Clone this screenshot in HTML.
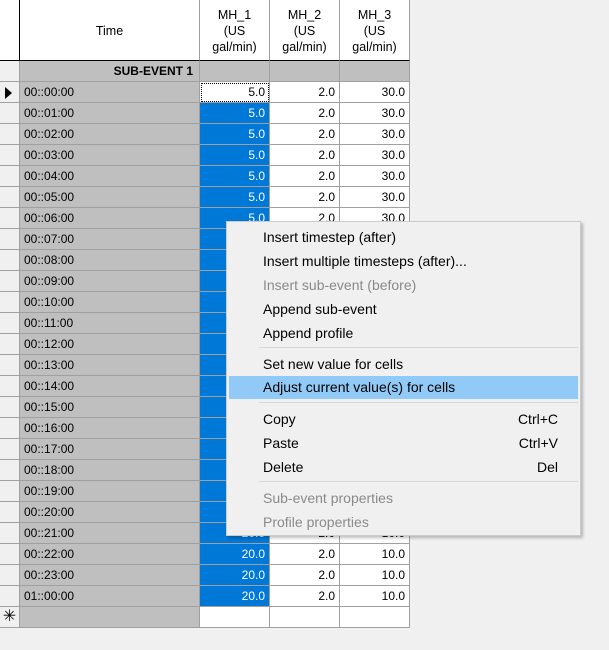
<!DOCTYPE html><html><head><style>
body{margin:0;width:609px;height:650px;background:#f0f0f0;font-family:"Liberation Sans",sans-serif;position:relative;overflow:hidden}
.r{position:absolute;left:0;height:21px;display:flex;font-size:12px}
.r div{box-sizing:border-box;height:21px;border-right:1px solid #a0a0a0;border-bottom:1px solid #a0a0a0;line-height:21px;white-space:nowrap}
.h{width:20px;background:#f0f0f0;border-right:1px solid #a0a0a0!important}
.t{width:180px;background:#bfbfbf;padding-left:4px;color:#000}
.c{width:70px;background:#fff;text-align:right;padding-right:4px}
.s{background:#0078d7;color:#fff}
.hd{position:absolute;top:0;height:61px;box-sizing:border-box;border-right:1px solid #a0a0a0;border-bottom:1px solid #000;background:#fff;font-size:12.5px;text-align:center;display:flex;align-items:center;justify-content:center;line-height:16px;padding-top:1px}
.m{position:absolute;left:226px;top:221px;width:355px;height:315px;box-sizing:border-box;background:#f0f0f0;border:1px solid #cccccc;box-shadow:2px 2px 3px rgba(0,0,0,.25);font-size:14px}
.i{position:absolute;left:36px;height:24px;line-height:22px;color:#000}
.d{color:#8a8a8a}
.k{position:absolute;right:22px}
.sep{position:absolute;left:32px;right:2px;height:1px;background:#d7d7d7}
</style></head><body>
<div class="hd" style="left:0;width:20px;border-right:1px solid #000;background:#fff"></div>
<div class="hd" style="left:20px;width:180px">Time</div>
<div class="hd" style="left:200px;width:70px">MH_1<br>(US<br>gal/min)</div>
<div class="hd" style="left:270px;width:70px">MH_2<br>(US<br>gal/min)</div>
<div class="hd" style="left:340px;width:70px">MH_3<br>(US<br>gal/min)</div>
<div class="r" style="top:61px"><div class="h"></div><div class="t" style="text-align:right;font-weight:bold;padding-right:6px">SUB-EVENT 1</div><div class="c" style="background:#bfbfbf"></div><div class="c" style="background:#bfbfbf"></div><div class="c" style="background:#bfbfbf"></div></div>
<div class="r" style="top:82px"><div class="h" style="position:relative"><span style="position:absolute;left:5px;top:5px;width:0;height:0;border-top:6px solid transparent;border-bottom:6px solid transparent;border-left:7px solid #000"></span></div><div class="t">00::00:00</div><div class="c" style="outline:1px dotted #000;outline-offset:-2px">5.0</div><div class="c">2.0</div><div class="c">30.0</div></div>
<div class="r" style="top:103px"><div class="h"></div><div class="t">00::01:00</div><div class="c s">5.0</div><div class="c">2.0</div><div class="c">30.0</div></div>
<div class="r" style="top:124px"><div class="h"></div><div class="t">00::02:00</div><div class="c s">5.0</div><div class="c">2.0</div><div class="c">30.0</div></div>
<div class="r" style="top:145px"><div class="h"></div><div class="t">00::03:00</div><div class="c s">5.0</div><div class="c">2.0</div><div class="c">30.0</div></div>
<div class="r" style="top:166px"><div class="h"></div><div class="t">00::04:00</div><div class="c s">5.0</div><div class="c">2.0</div><div class="c">30.0</div></div>
<div class="r" style="top:187px"><div class="h"></div><div class="t">00::05:00</div><div class="c s">5.0</div><div class="c">2.0</div><div class="c">30.0</div></div>
<div class="r" style="top:208px"><div class="h"></div><div class="t">00::06:00</div><div class="c s">5.0</div><div class="c">2.0</div><div class="c">30.0</div></div>
<div class="r" style="top:229px"><div class="h"></div><div class="t">00::07:00</div><div class="c s">5.0</div><div class="c">2.0</div><div class="c">30.0</div></div>
<div class="r" style="top:250px"><div class="h"></div><div class="t">00::08:00</div><div class="c s">5.0</div><div class="c">2.0</div><div class="c">30.0</div></div>
<div class="r" style="top:271px"><div class="h"></div><div class="t">00::09:00</div><div class="c s">5.0</div><div class="c">2.0</div><div class="c">30.0</div></div>
<div class="r" style="top:292px"><div class="h"></div><div class="t">00::10:00</div><div class="c s">5.0</div><div class="c">2.0</div><div class="c">30.0</div></div>
<div class="r" style="top:313px"><div class="h"></div><div class="t">00::11:00</div><div class="c s">5.0</div><div class="c">2.0</div><div class="c">30.0</div></div>
<div class="r" style="top:334px"><div class="h"></div><div class="t">00::12:00</div><div class="c s">5.0</div><div class="c">2.0</div><div class="c">30.0</div></div>
<div class="r" style="top:355px"><div class="h"></div><div class="t">00::13:00</div><div class="c s">5.0</div><div class="c">2.0</div><div class="c">30.0</div></div>
<div class="r" style="top:376px"><div class="h"></div><div class="t">00::14:00</div><div class="c s">5.0</div><div class="c">2.0</div><div class="c">30.0</div></div>
<div class="r" style="top:397px"><div class="h"></div><div class="t">00::15:00</div><div class="c s">20.0</div><div class="c">2.0</div><div class="c">10.0</div></div>
<div class="r" style="top:418px"><div class="h"></div><div class="t">00::16:00</div><div class="c s">20.0</div><div class="c">2.0</div><div class="c">10.0</div></div>
<div class="r" style="top:439px"><div class="h"></div><div class="t">00::17:00</div><div class="c s">20.0</div><div class="c">2.0</div><div class="c">10.0</div></div>
<div class="r" style="top:460px"><div class="h"></div><div class="t">00::18:00</div><div class="c s">20.0</div><div class="c">2.0</div><div class="c">10.0</div></div>
<div class="r" style="top:481px"><div class="h"></div><div class="t">00::19:00</div><div class="c s">20.0</div><div class="c">2.0</div><div class="c">10.0</div></div>
<div class="r" style="top:502px"><div class="h"></div><div class="t">00::20:00</div><div class="c s">20.0</div><div class="c">2.0</div><div class="c">10.0</div></div>
<div class="r" style="top:523px"><div class="h"></div><div class="t">00::21:00</div><div class="c s">20.0</div><div class="c">2.0</div><div class="c">10.0</div></div>
<div class="r" style="top:544px"><div class="h"></div><div class="t">00::22:00</div><div class="c s">20.0</div><div class="c">2.0</div><div class="c">10.0</div></div>
<div class="r" style="top:565px"><div class="h"></div><div class="t">00::23:00</div><div class="c s">20.0</div><div class="c">2.0</div><div class="c">10.0</div></div>
<div class="r" style="top:586px"><div class="h"></div><div class="t">01::00:00</div><div class="c s">20.0</div><div class="c">2.0</div><div class="c">10.0</div></div>
<div class="r" style="top:607px"><div class="h" style="text-align:center;font-size:16px;line-height:20px">✳</div><div class="t"></div><div class="c"></div><div class="c"></div><div class="c"></div></div>

<div class="m">
<div class="i" style="top:4px">Insert timestep (after)</div>
<div class="i" style="top:28px">Insert multiple timesteps (after)...</div>
<div class="i d" style="top:52px">Insert sub-event (before)</div>
<div class="i" style="top:76px">Append sub-event</div>
<div class="i" style="top:100px">Append profile</div>
<div class="sep" style="top:125px"></div>
<div class="i" style="top:131px">Set new value for cells</div>
<div style="position:absolute;left:2px;right:2px;top:154px;height:23px;background:#91c9f7"></div>
<div class="i" style="top:154px">Adjust current value(s) for cells</div>
<div class="sep" style="top:180px"></div>
<div class="i" style="top:186px;right:0">Copy<span class="k">Ctrl+C</span></div>
<div class="i" style="top:210px;right:0">Paste<span class="k">Ctrl+V</span></div>
<div class="i" style="top:234px;right:0">Delete<span class="k">Del</span></div>
<div class="sep" style="top:259px"></div>
<div class="i d" style="top:265px">Sub-event properties</div>
<div class="i d" style="top:289px">Profile properties</div>
</div>
</body></html>
